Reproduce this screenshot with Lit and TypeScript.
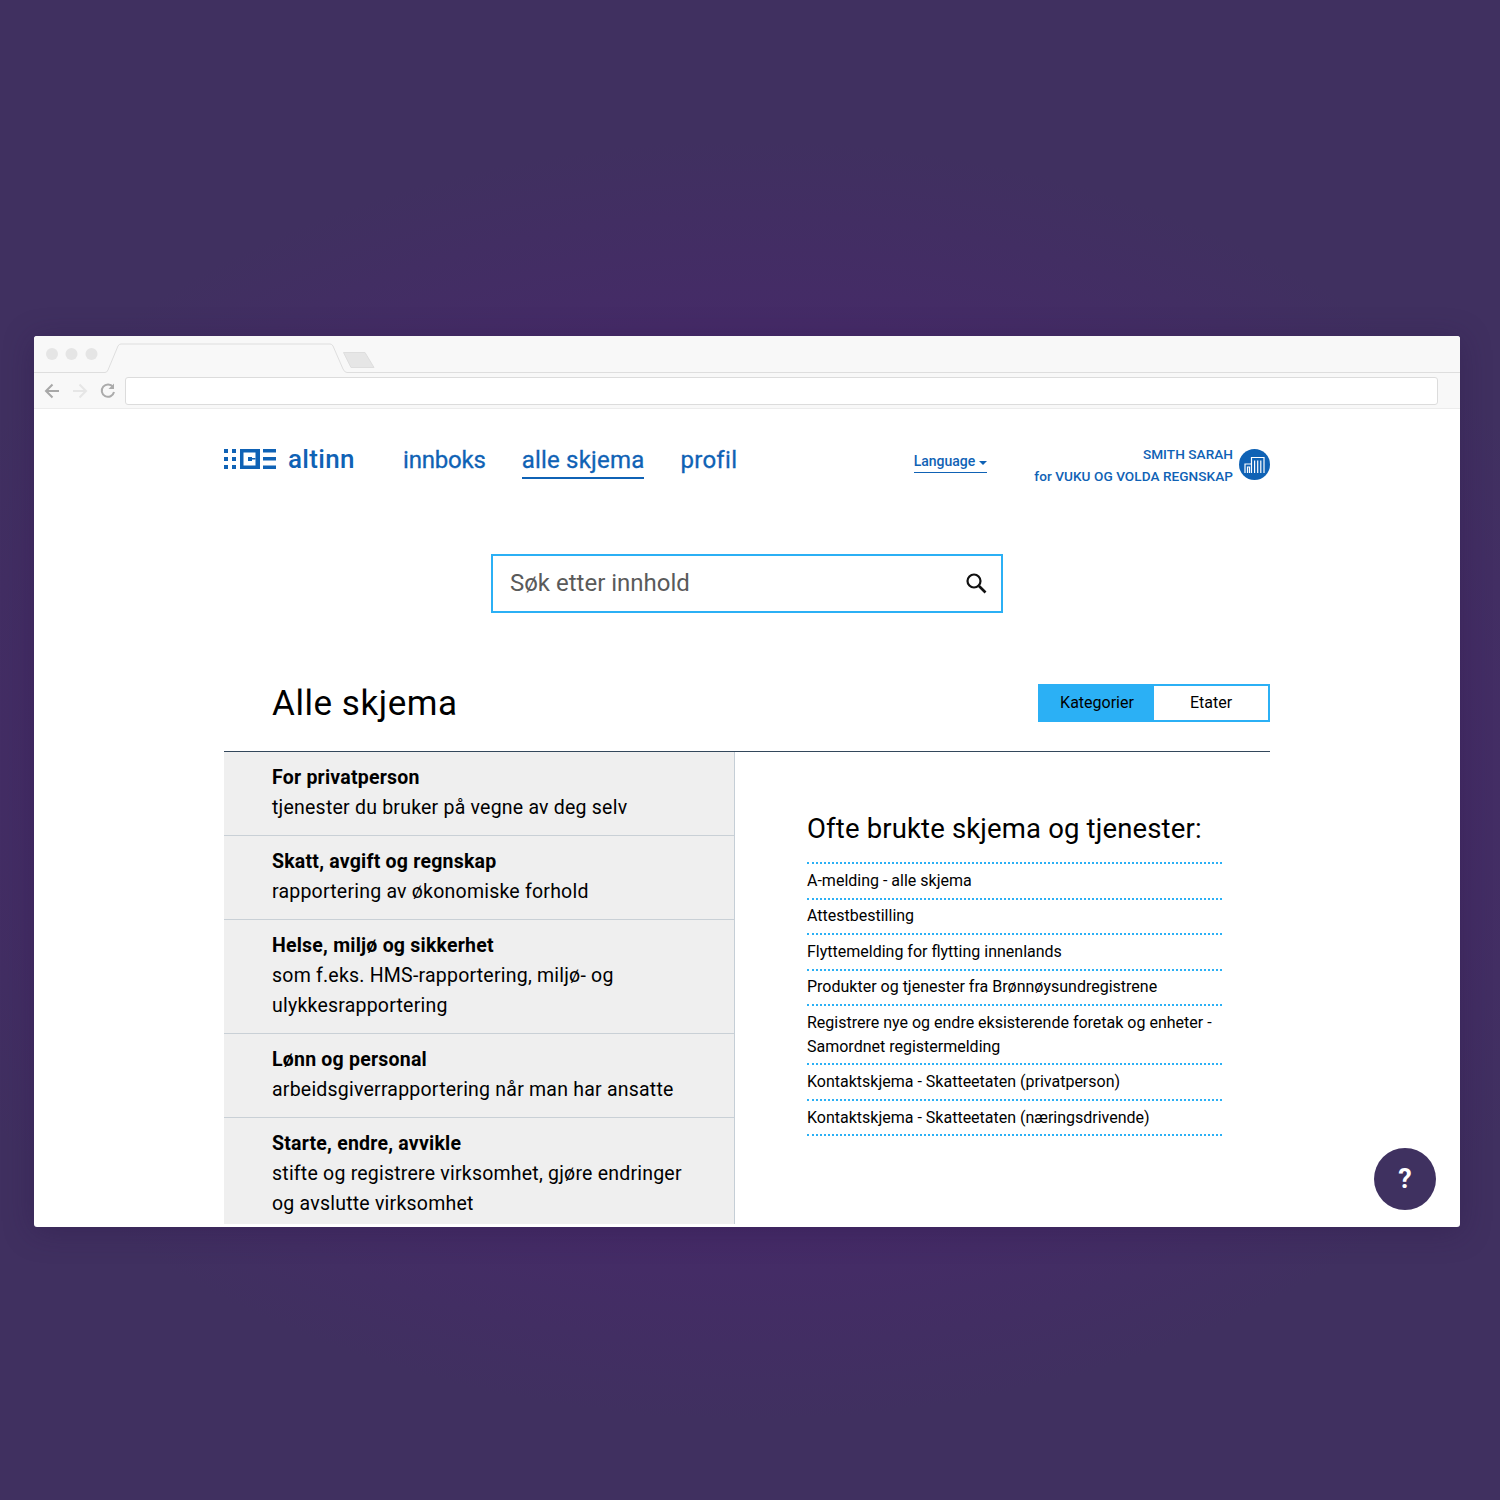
import { LitElement, html, css } from "lit";
import { customElement } from "lit/decorators.js";

const cats = [
  ["For privatperson", "tjenester du bruker på vegne av deg selv"],
  ["Skatt, avgift og regnskap", "rapportering av økonomiske forhold"],
  ["Helse, miljø og sikkerhet", "som f.eks. HMS-rapportering, miljø- og ulykkesrapportering"],
  ["Lønn og personal", "arbeidsgiverrapportering når man har ansatte"],
  ["Starte, endre, avvikle", "stifte og registrere virksomhet, gjøre endringer og avslutte virksomhet"],
];
const links = [
  "A-melding - alle skjema",
  "Attestbestilling",
  "Flyttemelding for flytting innenlands",
  "Produkter og tjenester fra Brønnøysundregistrene",
  "Registrere nye og endre eksisterende foretak og enheter - Samordnet registermelding",
  "Kontaktskjema - Skatteetaten (privatperson)",
  "Kontaktskjema - Skatteetaten (næringsdrivende)",
];

@customElement("app-root")
export class AppRoot extends LitElement {
  static styles = css`
    :host { display: block; width: 1500px; height: 1500px; overflow: hidden; box-sizing: border-box; padding: 336px 40px 0 34px;
      background: radial-gradient(ellipse 900px 640px at 750px 780px, #47296a 60%, #403060 100%);
      font-family: Roboto, "Noto Sans", sans-serif; color: #000; }
    .window { width: 1426px; height: 891px; background: #fff; border-radius: 3px; overflow: hidden; display: flex; flex-direction: column; box-shadow: 0 4px 30px rgba(40,20,70,.35); }
    .strip { height: 37px; background: #f8f8f8; flex: none; display: flex; }
    .strip svg { display: block; flex: none; }
    .strip div { flex: 1; height: 37px; box-sizing: border-box; border-bottom: 1px solid #dedede; }
    .toolbar { height: 35px; flex: none; background: #f8f8f8; border-bottom: 1px solid #ececec; display: flex; align-items: center; padding: 0 22px 0 10px; }
    .navs { width: 81px; flex: none; display: block; }
    .url { flex: 1; height: 26px; background: #fff; border: 1px solid #dcdcdc; border-radius: 3px; }
    .page { flex: 1; position: relative; padding: 0 190px; min-height: 0; }
    header { display: flex; align-items: flex-start; height: 145px; color: #0f62b5; }
    .logo { display: flex; align-items: center; margin-top: 36px; height: 28px; width: 179px; flex: none; }
    .logo svg { flex: none; margin-right: 11px; }
    .logo span { font-size: 26px; font-weight: 500; letter-spacing: 0.3px; }
    nav { display: flex; gap: 36px; margin-top: 35px; flex: none; }
    nav a { font-size: 24px; line-height: 33px; height: 33px; padding-bottom: 2px; font-weight: 400; -webkit-text-stroke: .3px #0f62b5; }
    nav a.n1 { letter-spacing: -.2px; }
    nav a.n2 { letter-spacing: .2px; border-bottom: 2px solid #0f62b5; padding-bottom: 0; }
    nav a.n3 { letter-spacing: .3px; }
    .lang { margin-left: auto; margin-top: 42px; font-size: 14px; line-height: 20px; border-bottom: 1px solid #0f62b5; padding-bottom: 1px; height: 20px; font-weight: 500; display: flex; align-items: center; gap: 4px; }
    .lang i { display: block; border: 4px solid transparent; border-top-color: #0f62b5; border-bottom: 0; margin-top: 3px; }
    .user { margin-left: 47px; margin-top: 34px; display: flex; gap: 6px; align-items: center; text-align: right; font-size: 13.6px; letter-spacing: .05px; line-height: 22px; font-weight: 500; }
    .user svg { margin-bottom: 2px; }
    .search { width: 512px; height: 59px; box-sizing: border-box; border: 2px solid #2bb0f5; margin-left: 267px; display: flex; align-items: center; padding: 0 13px 0 17px; justify-content: space-between; }
    .search span { font-size: 24px; color: #5a5a5a; margin-bottom: 2px; }
    .search svg { margin-bottom: 2px; }
    .head { display: flex; justify-content: space-between; align-items: center; margin-top: 70px; height: 40px; padding-left: 48px; }
    h1 { font-size: 35px; font-weight: 400; margin: 0; letter-spacing: .55px; }
    .toggle { display: flex; width: 232px; height: 38px; box-sizing: border-box; border: 2px solid #2bb0f5; font-size: 16px; }
    .toggle div { display: flex; align-items: center; justify-content: center; padding-bottom: 2px; }
    .toggle .a { width: 114px; background: #2bb0f5; }
    .toggle .b { flex: 1; }
    .cols { display: flex; margin-top: 28px; border-top: 1px solid #33475b; }
    .left { width: 511px; box-sizing: border-box; border-right: 1px solid #c5ced6; height: 472px; overflow: hidden; flex: none; }
    .cat { background: #efefef; padding: 11px 48px 12px; border-bottom: 1px solid #c9d0d6; font-size: 19.5px; line-height: 30px; letter-spacing: .22px; }
    .cat b { display: block; font-weight: 700; }
    .right { padding: 61px 0 0 72px; width: 415px; box-sizing: content-box; }
    h2 { font-size: 27.5px; font-weight: 400; margin: 0 0 17px; line-height: 32px; letter-spacing: .15px; }
    ul { list-style: none; margin: 0; padding: 0; border-top: 2px dotted #2bb0f5; font-size: 16px; line-height: 24px; }
    li { padding: 4.8px 0; border-bottom: 2px dotted #2bb0f5; margin-bottom: -.15px; }
    .help { position: absolute; right: 24px; top: 739px; width: 62px; height: 62px; border-radius: 50%; background: #3f3160; color: #fff; font-size: 27px; font-weight: 700; display: flex; align-items: center; justify-content: center; }
  `;

  render() {
    return html`<div class="window">
      <div class="strip">
        <svg width="400" height="37" viewBox="0 0 400 37" fill="none">
          <circle cx="18" cy="18" r="6" fill="#e5e5e5"/><circle cx="37.500" cy="18" r="6" fill="#e5e5e5"/><circle cx="57.500" cy="18" r="6" fill="#e5e5e5"/>
          <path d="M0 36.500H71Q73 36.500 74 34L84 10Q85 8 87 8H296Q298 8 299 10L309 33Q310.500 36.500 313 36.500H400" stroke="#dedede" fill="#f8f8f8"/>
          <path d="M309.500 16.500H331L340 31.500H317Z" fill="#e6e6e6" stroke="#dedede" stroke-linejoin="round"/>
        </svg>
        <div></div>
      </div>
      <div class="toolbar">
        <svg class="navs" width="81" height="20" viewBox="0 0 81 20" fill="none" stroke-width="2">
          <path d="M14 10H1M7.500 3.500L1 10l6.500 6.500" stroke="#a8a8a8" transform="translate(1 0)"/>
          <path d="M29 10H42M35.500 3.500L42 10l-6.500 6.500" stroke="#e6e6e6"/>
          <path d="M69 6A6.200 6.200 0 1 0 70 11" stroke="#ababab"/><path d="M70 2.500V8H64.500Z" fill="#ababab" stroke="none"/>
        </svg>
        <div class="url"></div>
      </div>
      <div class="page">
        <header>
          <div class="logo">
            <svg width="53" height="20" viewBox="0 0 53 20" fill="#0f62b5">
              <rect x="0" y="0" width="4" height="4"/><rect x="8" y="0" width="4" height="4"/>
              <rect x="0" y="8" width="4" height="4"/><rect x="8" y="8" width="4" height="4"/>
              <rect x="0" y="16" width="4" height="4"/><rect x="8" y="16" width="4" height="4"/>
              <path fill-rule="evenodd" d="M16 0H36V20H16ZM19.500 3.500V16.500H31.500V3.500Z"/>
              <rect x="24" y="8" width="4" height="4"/>
              <rect x="28" y="9" width="3.500" height="1.500"/>
              <rect x="39" y="0" width="13" height="3.500"/><rect x="39" y="8" width="13" height="3.500"/><rect x="39" y="16.500" width="13" height="3.500"/>
            </svg>
            <span>altinn</span>
          </div>
          <nav><a class="n1">innboks</a><a class="n2">alle skjema</a><a class="n3">profil</a></nav>
          <div class="lang">Language <i></i></div>
          <div class="user">
            <div>SMITH SARAH<br>for VUKU OG VOLDA REGNSKAP</div>
            <svg width="31" height="31" viewBox="0 0 31 31">
              <circle cx="15.500" cy="15.500" r="15.500" fill="#0f62b5"/>
              <path d="M12.500 24V8.500H25V24M15.600 24V11.500M18.700 24V11.500M21.800 24V11.500M6 24V15H12.500M8.500 24V18H10.500V24" fill="none" stroke="#fff" stroke-width="1.200"/>
            </svg>
          </div>
        </header>
        <div class="search">
          <span>Søk etter innhold</span>
          <svg width="24" height="24" viewBox="0 0 24 24" fill="none" stroke="#111"><circle cx="10" cy="10" r="6.500" stroke-width="2.200"/><path d="M15 15L21.500 21.500" stroke-width="2.600"/></svg>
        </div>
        <div class="head">
          <h1>Alle skjema</h1>
          <div class="toggle"><div class="a">Kategorier</div><div class="b">Etater</div></div>
        </div>
        <div class="cols">
          <div class="left">
            ${cats.map(([t, d]) => html`<div class="cat"><b>${t}</b>${d}</div>`)}
          </div>
          <div class="right">
            <h2>Ofte brukte skjema og tjenester:</h2>
            <ul>${links.map((l) => html`<li>${l}</li>`)}</ul>
          </div>
        </div>
        <div class="help">?</div>
      </div>
    </div>`;
  }
}
